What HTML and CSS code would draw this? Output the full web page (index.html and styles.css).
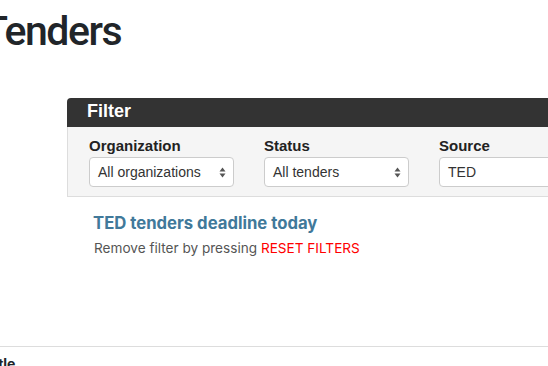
FILE: index.html
```html
<!DOCTYPE html>
<html>
<head>
<meta charset="utf-8">
<link rel="stylesheet" href="styles.css">
</head>
<body>
<div class="page">
  <h1 class="title">Tenders</h1>
  <section class="filter">
    <div class="filter-head">Filter</div>
    <div class="filter-body">
      <div class="field">
        <label>Organization</label>
        <div class="select"><span>All organizations</span><svg width="7" height="11" viewBox="0 0 7 11"><path d="M3.5 0.5 L6.5 4.5 H0.5 Z M3.5 10.5 L6.5 6.5 H0.5 Z" fill="#555"/></svg></div>
      </div>
      <div class="field">
        <label>Status</label>
        <div class="select"><span>All tenders</span><svg width="7" height="11" viewBox="0 0 7 11"><path d="M3.5 0.5 L6.5 4.5 H0.5 Z M3.5 10.5 L6.5 6.5 H0.5 Z" fill="#555"/></svg></div>
      </div>
      <div class="field">
        <label>Source</label>
        <div class="input">TED</div>
      </div>
    </div>
  </section>
  <div class="notice">
    <h2>TED tenders deadline today</h2>
    <p>Remove filter by pressing <span class="reset">RESET FILTERS</span></p>
  </div>
  <table class="list">
    <thead><tr><th>Title</th></tr></thead>
  </table>
</div>
</body>
</html>
```
FILE: styles.css
```css
html, body {
  margin: 0;
  padding: 0;
  background: #fff;
  overflow: hidden;
}
body {
  width: 548px;
  height: 366px;
}
.page {
  margin-left: -18px;
  width: 640px;
  font-family: Inter, "Liberation Sans", sans-serif;
  color: #212529;
}
.title {
  margin: 0 0 0 1px;
  padding-top: 7px;
  font-family: Roboto, "Liberation Sans", sans-serif;
  font-size: 41px;
  font-weight: 500;
  line-height: 48px;
  letter-spacing: -1.5px;
  color: #212529;
}
.filter {
  margin: 43px 0 0 85px;
  font-family: "Liberation Sans", Arial, sans-serif;
}
.filter-head {
  background: #333;
  color: #fff;
  font-weight: bold;
  font-size: 18px;
  height: 29px;
  line-height: 27px;
  padding-left: 20px;
  border-radius: 4px 4px 0 0;
}
.filter-body {
  display: flex;
  gap: 30px;
  background: #f5f5f5;
  border: 1px solid #ddd;
  border-top: none;
  padding: 9px 0 9px 21px;
}
.field label {
  display: block;
  font-weight: bold;
  font-size: 15px;
  color: #222;
  line-height: 20px;
  margin-bottom: 1px;
}
.select, .input {
  box-sizing: border-box;
  width: 145px;
  height: 30px;
  border: 1px solid #ccc;
  border-radius: 4px;
  background: #fff;
  font-size: 14px;
  color: #333;
  display: flex;
  align-items: center;
  justify-content: space-between;
  padding: 0 7px 0 8px;
}
.input {
  width: 200px;
}
.notice {
  margin: 15px 0 0 111px;
}
.notice h2 {
  margin: 0;
  font-size: 16.7px;
  font-weight: 700;
  color: #41799a;
  line-height: 22px;
}
.notice p {
  margin: 5px 0 0 1px;
  font-size: 13.6px;
  color: #555;
  line-height: 18px;
}
.reset {
  color: #f00;
}
.list {
  margin-top: 89px;
  width: 100%;
  border-collapse: collapse;
}
.list th {
  text-align: left;
  border-top: 1px solid #ddd;
  padding: 8px 0 0 3px;
  font-size: 14px;
  font-weight: 700;
  color: #212529;
}
```
